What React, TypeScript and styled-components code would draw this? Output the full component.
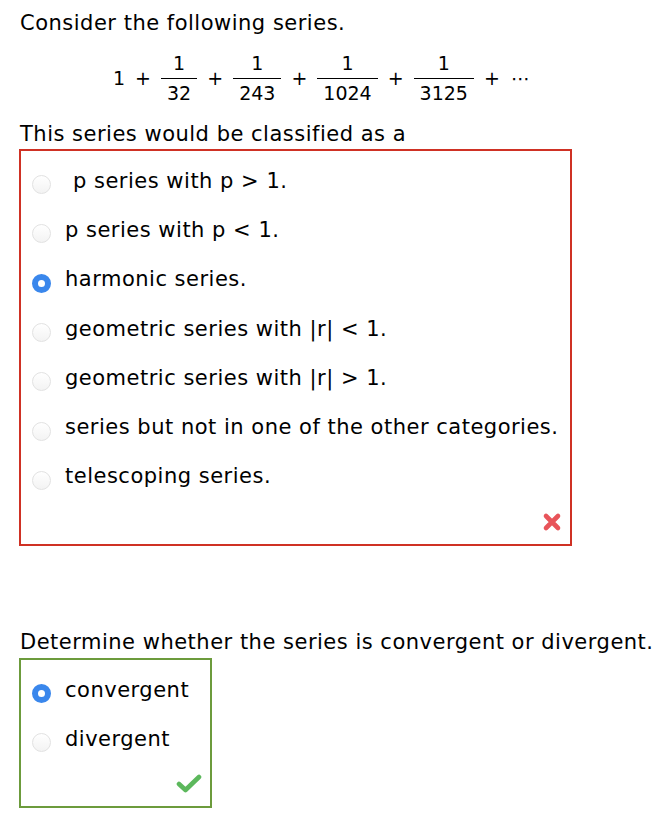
import styled, { createGlobalStyle } from "styled-components";

const GlobalStyle = createGlobalStyle`
    body {
        margin: 0;
        background: #ffffff;
        font-family: "DejaVu Sans", Verdana, sans-serif;
        color: #000000;
    }
`

const radioOptions = [
    { label: "p series with p > 1.", checked: false, indent: true },
    { label: "p series with p < 1.", checked: false },
    { label: "harmonic series.", checked: true },
    { label: "geometric series with |r| < 1.", checked: false },
    { label: "geometric series with |r| > 1.", checked: false },
    { label: "series but not in one of the other categories.", checked: false },
    { label: "telescoping series.", checked: false },
]

const terms = ["32", "243", "1024", "3125"]

const Radio = ({ checked }: { checked: boolean }) => (
    <RadioDot checked={checked} />
)

const CrossMark = () => (
    <svg width="20" height="20" viewBox="0 0 20 20">
        <path d="M4 4 L16 16 M16 4 L4 16" stroke="#e8545a" strokeWidth="4.6" strokeLinecap="round" />
    </svg>
)

const CheckMark = () => (
    <svg width="26" height="21" viewBox="0 0 26 21">
        <path d="M3 11 L9.5 17 L23 4" fill="none" stroke="#5cb85c" strokeWidth="4.6" strokeLinecap="round" strokeLinejoin="round" />
    </svg>
)

export default function App() {
    return (
        <Page>
            <GlobalStyle />
            <Text>Consider the following series.</Text>

            <Formula>
                <span>1</span>
                <Op>+</Op>
                {terms.map((d) => (
                    <Term key={d}>
                        <Fraction>
                            <Num>1</Num>
                            <Den>{d}</Den>
                        </Fraction>
                        <Op>+</Op>
                    </Term>
                ))}
                <Dots>⋯</Dots>
            </Formula>

            <Text>This series would be classified as a</Text>

            <AnswerBox tone="wrong" width={553} height={397} gap={3}>
                {radioOptions.map((o) => (
                    <Option key={o.label}>
                        <Radio checked={o.checked} />
                        <Label indent={o.indent}>{o.label}</Label>
                    </Option>
                ))}
                <Mark><CrossMark /></Mark>
            </AnswerBox>

            <Question>Determine whether the series is convergent or divergent.</Question>

            <AnswerBox tone="right" width={193} height={150} gap={1}>
                <Option>
                    <Radio checked />
                    <Label>convergent</Label>
                </Option>
                <Option>
                    <Radio checked={false} />
                    <Label>divergent</Label>
                </Option>
                <Mark><CheckMark /></Mark>
            </AnswerBox>
        </Page>
    );
}

const Page = styled.div`
    padding: 11px 0 20px 19px;
    font-size: 21px;
    letter-spacing: 0.5px;
    line-height: 24px;
`

const Text = styled.p`
    margin: 0 0 0 1px;
`

const Question = styled.p`
    margin: 84px 0 4px 1px;
`

const Formula = styled.div`
    display: flex;
    align-items: center;
    padding-left: 94px;
    margin: 11px 0 12px;
    height: 64px;
    font-size: 19px;
    letter-spacing: 0;
`

const Term = styled.span`
    display: inline-flex;
    align-items: center;
`

const Op = styled.span`
    margin: 0 10px;
`

const Fraction = styled.span`
    display: inline-flex;
    flex-direction: column;
    align-items: center;
    line-height: 29px;
`

const Num = styled.span`
    border-bottom: 1.5px solid #000;
    padding: 0 6px;
    width: 100%;
    text-align: center;
    box-sizing: border-box;
`

const Den = styled.span`
    padding: 0 6px;
`

const Dots = styled.span`
    margin-left: 1px;
`

const AnswerBox = styled.div<{ tone: "wrong" | "right"; width: number; height: number; gap: number }>`
    position: relative;
    box-sizing: border-box;
    width: ${(p) => p.width}px;
    height: ${(p) => p.height}px;
    margin-top: ${(p) => p.gap}px;
    border: 2px solid ${(p) => (p.tone === "wrong" ? "#cf3124" : "#6c9b3c")};
    padding: 5px 0 0 10px;
    display: flex;
    flex-direction: column;
`

const Option = styled.label`
    display: flex;
    align-items: center;
    height: 49.3px;
`

const RadioDot = styled.span<{ checked: boolean }>`
    flex: none;
    box-sizing: border-box;
    width: 19px;
    height: 19px;
    border-radius: 50%;
    margin: 8px 14px 0 1px;
    ${(p) =>
        p.checked
            ? `
        background: #fff;
        border: 6px solid #3a87ec;
    `
            : `
        background: linear-gradient(#ffffff, #f3f3f3);
        border: 1px solid #e2e2e2;
    `}
`

const Label = styled.span<{ indent?: boolean }>`
    padding-left: ${(p) => (p.indent ? 8 : 0)}px;
`

const Mark = styled.div`
    position: absolute;
    right: 8px;
    bottom: 12px;
    line-height: 0;
`
